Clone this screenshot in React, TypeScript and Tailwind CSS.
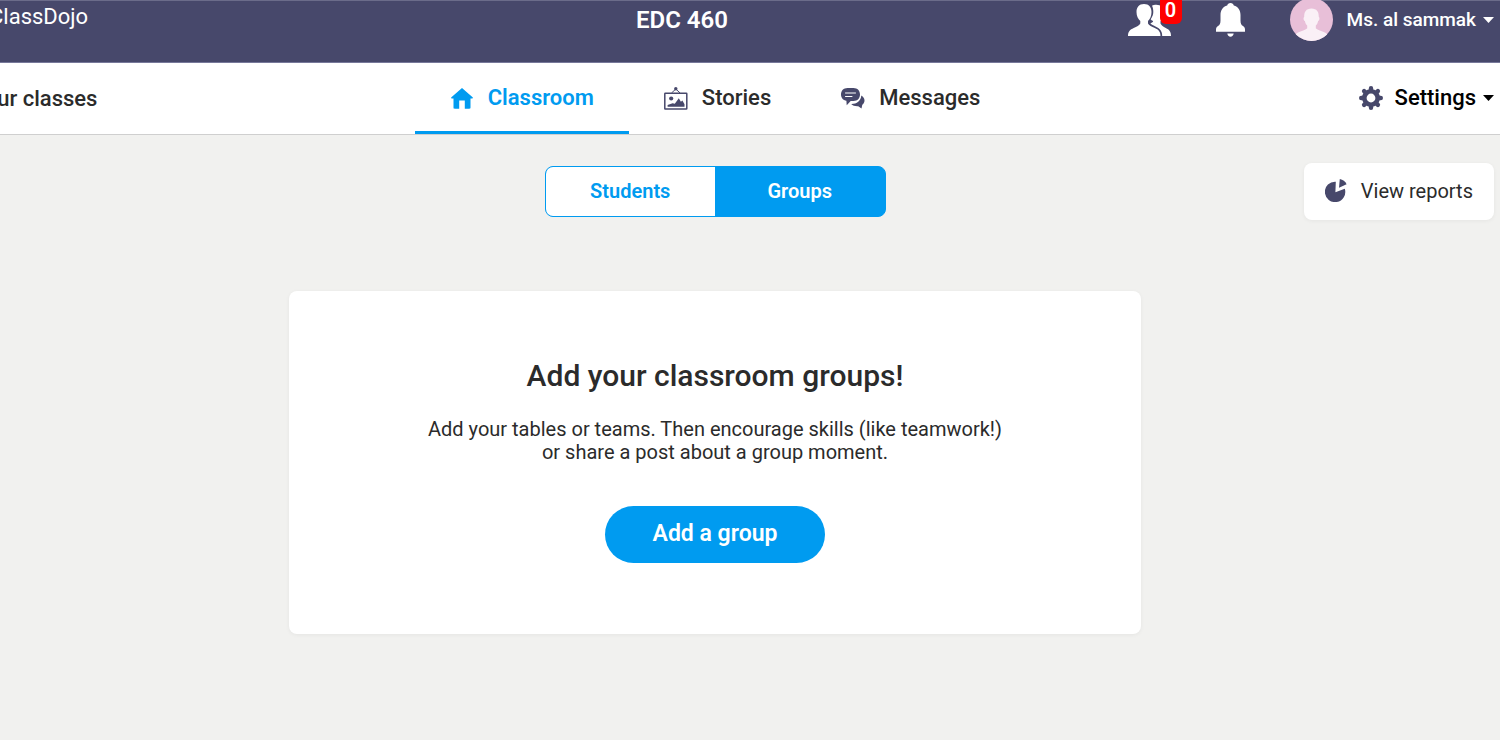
import React from 'react';

interface IconProps {
  className?: string;
}

// --- ICONS ---
const PeopleIcon = ({ className }: IconProps) => (
  <svg viewBox="0 0 44 32" fill="currentColor" className={className} aria-hidden="true">
    <path d="M16 0c5 0 7.500 3.500 7.500 8 0 3.800-1.300 7-3.500 9v2.500c.8 2 3.800 3.200 6.800 4.500 3.700 1.700 5.700 3.500 5.700 8H0c0-4.500 2-6.300 5.700-8 3-1.300 5.800-2.500 6.600-4.500V17c-2.300-2-3.800-5.200-3.800-9C8.500 3.500 11 0 16 0z" />
    <path d="M24 1.800C25.200 1 26.600.7 28.200.7c5 0 7.500 3.300 7.500 7.800 0 3.700-1.200 6.700-3.200 8.700v2.300c.8 2 2.800 3.200 5.300 4.500 3.400 1.700 5.200 3.500 5.200 8h-8.800c0-5-2.200-7.400-6.200-9.300-2.500-1.200-4.800-1.900-5.600-3.400 1.800-.5 2.700-1.300 2.700-2.300-1.200-.4-2-1-2.400-1.800 1.600-2 2.600-4.500 2.600-7.200 0-2.400-.4-4.500-1.300-6.200z" />
  </svg>
);

const BellIcon = ({ className }: IconProps) => (
  <svg viewBox="0 0 29 34" fill="currentColor" className={className} aria-hidden="true">
    <path d="M14.500 0c1.800 0 3 1 3.300 2.600 4.400 1.300 6.700 4.700 6.700 9.400v5.500c0 3 .8 4.500 2.500 5.500 1.400.8 2 2 2 3.500v2.300H0v-2.300c0-1.500.6-2.700 2-3.500 1.700-1 2.500-2.500 2.500-5.500V12c0-4.700 2.300-8.100 6.700-9.400C11.500 1 12.700 0 14.500 0z" />
    <path d="M11.300 30.600h6.400c-.2 2-1.500 3.200-3.200 3.200s-3-1.200-3.200-3.200z" />
  </svg>
);

const AvatarIcon = ({ className }: IconProps) => (
  <svg viewBox="0 0 43 43" className={className} aria-hidden="true">
    <clipPath id="avatar-clip">
      <circle cx="21.500" cy="21.500" r="21.500" />
    </clipPath>
    <g clipPath="url(#avatar-clip)">
      <rect width="43" height="43" fill="#e8bfd8" />
      <path d="M21.500 10.500c5.300 0 7.500 3.500 7.300 8.500 1 .3.900 3.500-.7 4-.4 2-1.200 3.500-2.300 4.500v2.700c1.500 2.200 10 3 13.200 7.800V43H4v-5c3.200-4.800 11.700-5.600 13.200-7.800v-2.700c-1.100-1-1.900-2.500-2.300-4.500-1.600-.5-1.700-3.700-.7-4-.2-5 2-8.500 7.300-8.500z" fill="#faf0f6" />
    </g>
  </svg>
);

const HomeIcon = ({ className }: IconProps) => (
  <svg viewBox="0 0 22 21" fill="currentColor" className={className} aria-hidden="true">
    <path d="M11 0l10.600 9.300c.6.500.4 1.200-.4 1.200h-1.700v9c0 .8-.4 1.200-1.200 1.200h-4.500v-8.200H8.200v8.200H3.700c-.8 0-1.200-.4-1.200-1.200v-9H.8c-.8 0-1-.7-.4-1.200z" />
  </svg>
);

const StoriesIcon = ({ className }: IconProps) => (
  <svg viewBox="0 0 24 23" fill="none" className={className} aria-hidden="true">
    <rect x="0.800" y="6.300" width="22" height="15.700" rx="0.500" stroke="currentColor" strokeWidth="1.500" />
    <path d="M7.500 6L11.800 2l4.300 4" stroke="currentColor" strokeWidth="1" />
    <circle cx="11.800" cy="1.800" r="1.700" fill="currentColor" />
    <circle cx="7.200" cy="11.500" r="2.100" fill="currentColor" />
    <path d="M3.600 19.700v-1.700l5-1.700 2.200.5 4-5.600 2.100 3.500 1.500-1.200 2.100 3.800v2.400z" fill="currentColor" />
  </svg>
);

const MessagesIcon = ({ className }: IconProps) => (
  <svg viewBox="0 0 24 21" className={className} aria-hidden="true">
    <path d="M20.300 7.500c2 1.300 3.200 3 3.200 5 0 1.700-.8 3.200-2.200 4.300l-.8 3.700-3.300-2.300c-2.900.2-5.400-.5-7-2.200 5.200.2 9.800-3 10.100-8.500z" fill="currentColor" />
    <path d="M6.500 0h6c4 0 6.500 2.800 6.500 6.500S16.500 13 12.500 13h-2.800l-4 4.200-.3-4.400C2.100 12.300 0 9.800 0 6.500 0 2.800 2.500 0 6.500 0z" fill="currentColor" />
    <path d="M4.500 5h10M4.500 8.500h6.500" stroke="#fff" strokeWidth="1" strokeLinecap="round" />
  </svg>
);

const GearIcon = ({ className }: IconProps) => (
  <svg viewBox="0 0 24 24" fill="none" stroke="currentColor" className={className} aria-hidden="true">
    <circle cx="12" cy="12" r="6.700" strokeWidth="4.600" />
    <path d="M12 2.200v2M12 19.800v2M2.200 12h2M19.800 12h2M5.100 5.100l1.500 1.500M17.400 17.400l1.500 1.500M5.100 18.900l1.500-1.500M17.400 6.600l1.500-1.500" strokeWidth="4.400" strokeLinecap="round" />
  </svg>
);

const PieIcon = ({ className }: IconProps) => (
  <svg viewBox="0 0 22 23" fill="currentColor" className={className} aria-hidden="true">
    <path d="M10.800 2.700L10.400 13.200l9.400-3.400A10.200 10.200 0 1 1 10.800 2.700z" />
    <path d="M14.800 0c3 .5 5.500 2.400 6.800 5.200L14 8.700z" />
  </svg>
);

const Caret = ({ className }: IconProps) => (
  <svg viewBox="0 0 11 6" fill="currentColor" className={className} aria-hidden="true">
    <path d="M0 0h11L5.500 6z" />
  </svg>
);

// --- DATA ---
const tabs = [
  { name: 'Classroom', Icon: HomeIcon, iconClass: 'h-[21px]', active: true },
  { name: 'Stories', Icon: StoriesIcon, iconClass: 'h-[23px] text-[#47486b]', active: false },
  { name: 'Messages', Icon: MessagesIcon, iconClass: 'h-[21px] text-[#47486b]', active: false },
];

// --- TOP BAR ---
const TopBar = () => (
  <header className="grid grid-cols-[1fr_auto_1fr] items-start h-[63px] px-1.5 bg-[#47486b] border-t border-b border-t-[#6b6c8a] border-b-[#77789a] text-white">
    <a href="#" className="pl-[53px] pt-1 text-[22px] leading-6">ClassDojo</a>
    <h1 className="pt-[7px] pr-[66px] text-2xl leading-6 font-semibold">EDC 460</h1>
    <div className="flex justify-end items-start">
      <button type="button" aria-label="Connections" className="relative mt-[3px] mr-11">
        <PeopleIcon className="w-11 h-8" />
        <span className="absolute -top-1 left-8 w-[22px] h-6 rounded-b-md bg-[#fe0000] text-xl leading-5 font-semibold text-center">0</span>
      </button>
      <button type="button" aria-label="Notifications" className="mt-0.5 mr-[45px]">
        <BellIcon className="w-[29px] h-[34px]" />
      </button>
      <button type="button" className="flex items-center -mt-[3px] text-[19px] leading-6 font-medium">
        <AvatarIcon className="w-[43px] h-[43px] mr-3.5" />
        Ms. al sammak
        <Caret className="w-[11px] h-1.5 ml-[7px]" />
      </button>
    </div>
  </header>
);

// --- CLASS NAVIGATION ---
const ClassNav = () => (
  <nav className="grid grid-cols-[1fr_auto_1fr] h-[72px] px-1.5 bg-white border-b border-[#cfcfcf] text-[22px] leading-7 font-medium">
    <a href="#" className="self-center pl-9">Your classes</a>
    <div className="flex">
      {tabs.map(({ name, Icon, iconClass, active }) => (
        <a
          key={name}
          href="#"
          aria-current={active ? 'page' : undefined}
          className={`flex items-center px-[35px] pt-0.5 border-b-[3px] ${active ? 'border-[#009bf0] text-[#009bf0] font-semibold' : 'border-transparent'}`}
        >
          <Icon className={`w-6 mr-3.5 ${iconClass}`} />
          {name}
        </a>
      ))}
    </div>
    <button type="button" className="flex items-center justify-self-end pb-px text-black">
      <GearIcon className="w-6 h-6 mr-3 text-[#47486b]" />
      Settings
      <Caret className="w-[11px] h-1.5 ml-[7px]" />
    </button>
  </nav>
);

export default function App() {
  return (
    <div className="min-h-screen overflow-x-hidden bg-[#f1f1ef] font-[Roboto,sans-serif] text-[#2b2b2b]">
      {/* the page is scrolled a little to the right */}
      <div className="-ml-[70px]">
        <TopBar />
        <ClassNav />
        <main className="pt-7 pb-16">
          <div className="grid grid-cols-[1fr_auto_1fr] items-center px-1.5">
            <div />
            <div className="grid grid-cols-2 w-[341px] h-[51px] rounded-lg border border-[#009bf0] bg-[#009bf0] text-xl leading-6 font-semibold">
              <button type="button" className="pb-0.5 rounded-l-[7px] bg-white text-[#009bf0]">Students</button>
              <button type="button" className="pb-0.5 text-white">Groups</button>
            </div>
            <button type="button" className="flex items-center justify-self-end h-[57px] px-[21px] pb-0.5 rounded-lg bg-white shadow-[0_1px_4px_rgba(0,0,0,0.05)] text-xl leading-6">
              <PieIcon className="w-[22px] h-[23px] mr-3.5 text-[#47486b]" />
              View reports
            </button>
          </div>

          <section className="flex flex-col items-center max-w-[852px] mx-auto mt-[71px] pt-[67px] pb-[71px] rounded-lg bg-white shadow-[0_1px_4px_rgba(0,0,0,0.05)] text-center">
            <h2 className="text-[30px] leading-9 font-medium">Add your classroom groups!</h2>
            <p className="mt-6 text-xl leading-[23px]">
              Add your tables or teams. Then encourage skills (like teamwork!)
              <br />
              or share a post about a group moment.
            </p>
            <button type="button" className="mt-[42px] w-[220px] h-[57px] pb-0.5 rounded-full bg-[#009bf0] text-[23px] leading-7 font-semibold text-white">Add a group</button>
          </section>
        </main>
      </div>
    </div>
  );
}
